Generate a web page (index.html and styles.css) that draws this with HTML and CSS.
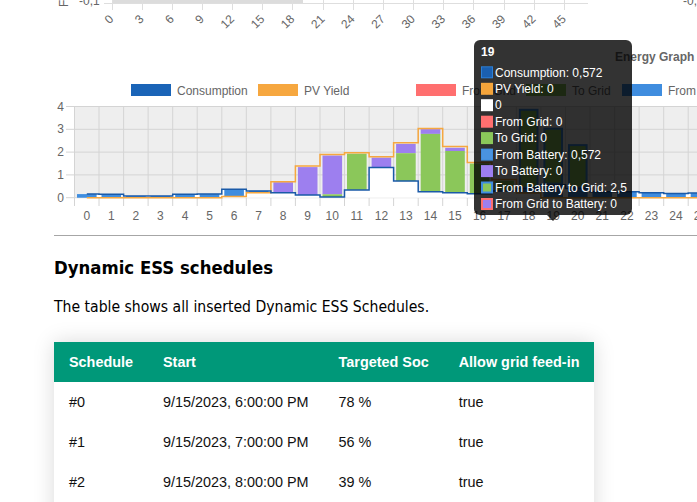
FILE: index.html
```html
<!DOCTYPE html>
<html lang="en">
<head>
<meta charset="utf-8">
<title>Dynamic ESS</title>
<link rel="stylesheet" href="styles.css">
</head>
<body>
<div class="chart">
<svg class="graph" width="697" height="235" viewBox="0 0 697 235">
  <!-- remnant of previous chart -->
  <text class="ax" transform="translate(68,7) rotate(-90)">From grid</text>
  <text class="ax" x="79" y="5">-0,1</text>
  <text class="ax" x="683" y="5">-0,1</text>
  <rect x="112" y="0" width="191" height="3" class="prev-fill"/>
  <line x1="104" y1="3.5" x2="588" y2="3.5" class="prev-grid"/>
  <path class="prev-grid" d="M112.5 0V10M142.5 0V10M172.5 0V10M202.5 0V10M232.5 0V10M262.5 0V10M292.5 0V10M323.5 0V10M353.5 0V10M383.5 0V10M413.5 0V10M443.5 0V10M473.5 0V10M504.5 0V10M534.5 0V10M564.5 0V10"/>
  <g class="ax rot">
    <text transform="translate(111.5,17) rotate(-45)">0</text>
    <text transform="translate(141.7,17) rotate(-45)">3</text>
    <text transform="translate(171.8,17) rotate(-45)">6</text>
    <text transform="translate(202,17) rotate(-45)">9</text>
    <text transform="translate(232.1,17) rotate(-45)">12</text>
    <text transform="translate(262.3,17) rotate(-45)">15</text>
    <text transform="translate(292.4,17) rotate(-45)">18</text>
    <text transform="translate(322.6,17) rotate(-45)">21</text>
    <text transform="translate(352.7,17) rotate(-45)">24</text>
    <text transform="translate(382.9,17) rotate(-45)">27</text>
    <text transform="translate(413,17) rotate(-45)">30</text>
    <text transform="translate(443.2,17) rotate(-45)">33</text>
    <text transform="translate(473.3,17) rotate(-45)">36</text>
    <text transform="translate(503.5,17) rotate(-45)">39</text>
    <text transform="translate(533.6,17) rotate(-45)">42</text>
    <text transform="translate(563.8,17) rotate(-45)">45</text>
  </g>

  <!-- title -->
  <text class="title" x="615" y="61">Energy Graph</text>

  <!-- legend -->
  <rect x="131" y="84" width="40" height="12" fill="#1a64b7"/>
  <text class="ax" x="177" y="94.5">Consumption</text>
  <rect x="258" y="84" width="40" height="12" fill="#f6a73f"/>
  <text class="ax" x="304" y="94.5">PV Yield</text>
  <rect x="416" y="84" width="40" height="12" fill="#ff6f6f"/>
  <text class="ax" x="462" y="94.5">From Grid</text>
  <rect x="526" y="84" width="40" height="12" fill="#8bc75a"/>
  <text class="ax" x="572" y="94.5">To Grid</text>
  <rect x="622" y="84" width="40" height="12" fill="#3f8ddf"/>
  <text class="ax" x="668" y="94.5">From Battery</text>

  <!-- chart area -->
  <rect x="74.5" y="106.5" width="623" height="91.2" class="plot-bg"/>
  <path class="grid" d="M66 106.5H697M66 129.3H697M66 152.1H697M66 174.9H697M66 197.7H697"/>
  <path class="grid" d="M74.5 106.5V206M99 106.5V206M123.6 106.5V206M148.1 106.5V206M172.7 106.5V206M197.2 106.5V206M221.8 106.5V206M246.3 106.5V206M270.9 106.5V206M295.4 106.5V206M320 106.5V206M344.5 106.5V206M369.1 106.5V206M393.6 106.5V206M418.2 106.5V206M442.7 106.5V206M467.3 106.5V206M491.8 106.5V206M516.4 106.5V206M540.9 106.5V206M565.5 106.5V206M590 106.5V206M614.6 106.5V206M639.1 106.5V206M663.7 106.5V206M688.2 106.5V206"/>

  <g class="ax ylab">
    <text x="64" y="110.5">4</text>
    <text x="64" y="133.3">3</text>
    <text x="64" y="156.1">2</text>
    <text x="64" y="178.9">1</text>
    <text x="64" y="201.7">0</text>
  </g>
  <g class="ax xlab">
    <text x="86.8" y="220">0</text>
    <text x="111.3" y="220">1</text>
    <text x="135.9" y="220">2</text>
    <text x="160.4" y="220">3</text>
    <text x="185" y="220">4</text>
    <text x="209.5" y="220">5</text>
    <text x="234.1" y="220">6</text>
    <text x="258.6" y="220">7</text>
    <text x="283.2" y="220">8</text>
    <text x="307.7" y="220">9</text>
    <text x="332.3" y="220">10</text>
    <text x="356.8" y="220">11</text>
    <text x="381.4" y="220">12</text>
    <text x="405.9" y="220">13</text>
    <text x="430.5" y="220">14</text>
    <text x="455" y="220">15</text>
    <text x="479.6" y="220">16</text>
    <text x="504.1" y="220">17</text>
    <text x="528.7" y="220">18</text>
    <text x="553.2" y="220">19</text>
    <text x="577.8" y="220">20</text>
    <text x="602.3" y="220">21</text>
    <text x="626.9" y="220">22</text>
    <text x="651.4" y="220">23</text>
    <text x="676" y="220">24</text>
    <text x="700.5" y="220">25</text>
  </g>

  <!-- direct use (white fill under consumption) -->
  <path class="direct" d="M86.8 194.1H99V194.3H123.6V196.1H148.1V196.1H172.7V194.3H197.2V194.1H221.8V189.3H246.3V190.9H270.9V192.7H295.4V195H320V197H344.5V189.9H369.1V167.4H393.6V181.1H418.2V191.8H442.7V192.7H467.3V193.8H491.8V190.9H516.4V188.6H540.9V184.7H565.5V188.6H590V191.8H614.6V191.8H639.1V192.7H663.7V193.6H688.2V193.1H700.5V197.7H86.8Z"/>

  <!-- bars -->
  <g class="b-batt">
    <rect x="77" y="194.1" width="19.6" height="3.6"/>
    <rect x="101.5" y="194.3" width="19.6" height="3.4"/>
    <rect x="126.1" y="196.1" width="19.6" height="1.6"/>
    <rect x="150.6" y="196.1" width="19.6" height="1.6"/>
    <rect x="175.2" y="194.3" width="19.6" height="3.4"/>
    <rect x="199.7" y="194.1" width="19.6" height="3.6"/>
    <rect x="224.3" y="189.3" width="19.6" height="7.3"/>
    <rect x="248.8" y="190.9" width="19.6" height="1.8"/>
    <rect x="518.9" y="188.6" width="19.6" height="4.5"/>
    <rect x="543.4" y="184.7" width="19.6" height="13"/>
    <rect x="568" y="188.6" width="19.6" height="9.1"/>
    <rect x="592.5" y="191.8" width="19.6" height="5.9"/>
    <rect x="617.1" y="191.8" width="19.6" height="5.9"/>
    <rect x="641.6" y="192.7" width="19.6" height="5"/>
    <rect x="666.2" y="193.6" width="19.6" height="4.1"/>
    <rect x="690.7" y="193.1" width="19.6" height="4.6"/>
  </g>
  <g class="b-tobatt">
    <rect x="273.4" y="182.2" width="19.6" height="10.5"/>
    <rect x="297.9" y="167.1" width="19.6" height="27.9"/>
    <rect x="322.5" y="155.5" width="19.6" height="38.8"/>
    <rect x="371.6" y="157.6" width="19.6" height="9.8"/>
    <rect x="396.1" y="143.9" width="19.6" height="9.3"/>
    <rect x="420.7" y="129.1" width="19.6" height="4.8"/>
    <rect x="445.2" y="147.8" width="19.6" height="3.2"/>
  </g>
  <g class="b-togrid">
    <rect x="322.5" y="194.3" width="19.6" height="2.7"/>
    <rect x="347" y="153.7" width="19.6" height="36.2"/>
    <rect x="396.1" y="153.2" width="19.6" height="27.9"/>
    <rect x="420.7" y="133.9" width="19.6" height="57.9"/>
    <rect x="445.2" y="151" width="19.6" height="41.7"/>
    <rect x="469.8" y="163.5" width="19.6" height="30.3"/>
    <rect x="494.3" y="180.6" width="19.6" height="10.3"/>
  </g>
  <g class="b-b2g">
    <rect x="519.9" y="109.8" width="17.6" height="77.8"/>
    <rect x="544.4" y="128.7" width="17.6" height="55"/>
    <rect x="569" y="145.1" width="17.6" height="42.5"/>
  </g>

  <!-- lines -->
  <path class="l-pv" d="M86.8 197.7H221.8V196.6H246.3V192.7H270.9V181.7H295.4V166H320V154.4H344.5V152.8H369.1V156.7H393.6V142.7H418.2V128.4H442.7V146.6H467.3V162.6H491.8V179.5H516.4V193.1H540.9V197.7H700.5"/>
  <path class="l-cons" d="M86.8 194.1H99V194.3H123.6V196.1H148.1V196.1H172.7V194.3H197.2V194.1H221.8V189.3H246.3V190.9H270.9V192.7H295.4V195H320V197H344.5V189.9H369.1V167.4H393.6V181.1H418.2V191.8H442.7V192.7H467.3V193.8H491.8V190.9H516.4V188.6H540.9V184.7H565.5V188.6H590V191.8H614.6V191.8H639.1V192.7H663.7V193.6H688.2V193.1H700.5"/>

  <!-- tooltip -->
  <g class="tip">
    <rect x="474" y="40" width="158" height="175" rx="6" class="tip-bg"/>
    <path d="M547 215L553 221L559 215Z" class="tip-bg"/>
    <text class="tip-title" x="481" y="56">19</text>

    <rect x="481" y="66.3" width="12" height="12" fill="#2c7fd6"/>
    <rect x="482" y="67.3" width="10" height="10" fill="#1a5fb0"/>
    <text class="tip-text" x="495" y="76.5">Consumption: 0,572</text>

    <rect x="481" y="82.8" width="12" height="12" fill="#f6a73f"/>
    <rect x="482" y="83.8" width="10" height="10" fill="#f4a43a"/>
    <text class="tip-text" x="495" y="93">PV Yield: 0</text>

    <rect x="481" y="99.2" width="12" height="12" fill="#ffffff"/>
    <text class="tip-text" x="495" y="109.4">0</text>

    <rect x="481" y="115.7" width="12" height="12" fill="#ff6f6f"/>
    <text class="tip-text" x="495" y="125.9">From Grid: 0</text>

    <rect x="481" y="132.1" width="12" height="12" fill="#8bc75a"/>
    <text class="tip-text" x="495" y="142.3">To Grid: 0</text>

    <rect x="481" y="148.6" width="12" height="12" fill="#3f8ddf"/>
    <rect x="482" y="149.6" width="10" height="10" fill="#4a93e0"/>
    <text class="tip-text" x="495" y="158.8">From Battery: 0,572</text>

    <rect x="481" y="165.1" width="12" height="12" fill="#9d7fef"/>
    <text class="tip-text" x="495" y="175.3">To Battery: 0</text>

    <rect x="481" y="181.5" width="12" height="12" fill="#3f8ddf"/>
    <rect x="483" y="183.5" width="8" height="8" fill="#8bc75a"/>
    <text class="tip-text" x="495" y="191.7">From Battery to Grid: 2,5</text>

    <rect x="481" y="198" width="12" height="12" fill="#ff6f6f"/>
    <rect x="483" y="200" width="8" height="8" fill="#9d7fef"/>
    <text class="tip-text" x="495" y="208.2">From Grid to Battery: 0</text>
  </g>
</svg>
</div>
<div class="sep"></div>
<main class="content">
  <h3 class="heading">Dynamic ESS schedules</h3>
  <p class="lead">The table shows all inserted Dynamic ESS Schedules.</p>
  <table class="styled-table">
    <thead>
      <tr><th>Schedule</th><th>Start</th><th>Targeted Soc</th><th>Allow grid feed-in</th></tr>
    </thead>
    <tbody>
      <tr><td>#0</td><td>9/15/2023, 6:00:00 PM</td><td>78 %</td><td>true</td></tr>
      <tr><td>#1</td><td>9/15/2023, 7:00:00 PM</td><td>56 %</td><td>true</td></tr>
      <tr><td>#2</td><td>9/15/2023, 8:00:00 PM</td><td>39 %</td><td>true</td></tr>
      <tr><td>#3</td><td>9/15/2023, 9:00:00 PM</td><td>20 %</td><td>true</td></tr>
    </tbody>
  </table>
</main>
</body>
</html>
```
FILE: styles.css
```css
html, body {
  margin: 0;
  padding: 0;
  background: #ffffff;
  overflow: hidden;
}

.chart {
  width: 697px;
  height: 235px;
}

.graph {
  display: block;
  font-family: "Liberation Sans", Arial, sans-serif;
  font-size: 12px;
}

.ax {
  fill: #666666;
  font-size: 12px;
}

.rot text {
  text-anchor: end;
  dominant-baseline: central;
}

.ylab text {
  text-anchor: end;
}

.xlab text {
  text-anchor: middle;
}

.title {
  fill: #666666;
  font-weight: bold;
  font-size: 12px;
}

.prev-fill {
  fill: #dcdcdc;
}

.prev-grid {
  stroke: #dedede;
  stroke-width: 1;
  fill: none;
}

.plot-bg {
  fill: #eeeeee;
}

.grid {
  stroke: #d4d4d4;
  stroke-width: 1;
  fill: none;
}

.direct {
  fill: #ffffff;
}

.b-batt rect {
  fill: #3f8ddf;
}

.b-tobatt rect {
  fill: #9d7fef;
}

.b-togrid rect {
  fill: #8bc75a;
}

.b-b2g rect {
  fill: #8bc75a;
  stroke: #3f8ddf;
  stroke-width: 2;
}

.l-cons {
  fill: none;
  stroke: #1a5aa8;
  stroke-width: 1.5;
}

.l-pv {
  fill: none;
  stroke: #f6a73f;
  stroke-width: 1.5;
}

.tip-bg {
  fill: rgba(0, 0, 0, 0.8);
}

.tip-title {
  fill: #ffffff;
  font-weight: bold;
  font-size: 12px;
}

.tip-text {
  fill: #ffffff;
  font-size: 12px;
}

.sep {
  margin-left: 54px;
  border-top: 1px solid #a6a6a6;
}

.content {
  display: block;
  padding-left: 54px;
}

.heading {
  font-family: "DejaVu Sans Condensed", "DejaVu Sans", sans-serif;
  font-stretch: condensed;
  font-size: 18.4px;
  font-weight: bold;
  line-height: 22px;
  margin: 21px 0 19px;
  color: #000000;
}

.lead {
  font-family: "DejaVu Sans Condensed", "DejaVu Sans", sans-serif;
  font-stretch: condensed;
  font-size: 15.6px;
  line-height: 19px;
  margin: 0;
  color: #000000;
}

.styled-table {
  border-collapse: collapse;
  margin: 25px 0 0;
  font-family: "Liberation Sans", Arial, sans-serif;
  font-size: 14.4px;
  min-width: 400px;
  box-shadow: 0 0 20px rgba(0, 0, 0, 0.15);
}

.styled-table thead tr {
  background-color: #009879;
  color: #ffffff;
  text-align: left;
}

.styled-table th,
.styled-table td {
  padding: 12px 15px;
  line-height: 16px;
  text-align: left;
  white-space: nowrap;
}

.styled-table th {
  font-weight: bold;
}

.styled-table td {
  color: #111111;
}
```
